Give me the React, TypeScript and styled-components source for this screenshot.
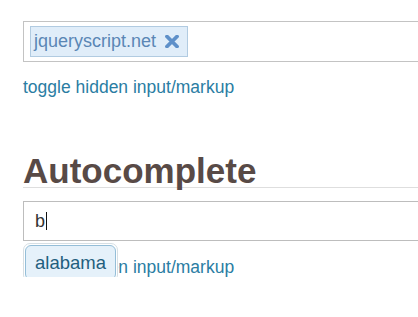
import React from 'react';
import styled, { createGlobalStyle } from 'styled-components';

const GlobalStyle = createGlobalStyle`
  html, body {
    margin: 0;
    padding: 0;
    background: #ffffff;
    overflow: hidden;
  }

  body {
    font-family: 'Liberation Sans', Arial, sans-serif;
  }
`;

const Page = styled.div`
  width: 600px;
  padding: 21px 0 0 23px;
`;

const TagBox = styled.div`
  box-sizing: border-box;
  height: 41px;
  border: 1px solid #c3c3c3;
  display: flex;
  align-items: center;
  padding: 0 6px;
`;

const Tag = styled.span`
  box-sizing: border-box;
  height: 31px;
  display: inline-flex;
  align-items: center;
  gap: 9px;
  padding: 0 8px 0 3px;
  background: #e0edf9;
  border: 1px solid #b1cbe1;
  color: #5a86b5;
  font-size: 18px;
`;

const Remove = styled.svg`
  width: 14px;
  height: 13px;
  display: block;
`;

const ToggleLink = styled.a`
  display: block;
  margin-top: ${({ $top }: { $top: number }) => $top}px;
  color: #2a7da3;
  font-size: 17.5px;
  line-height: 20px;
  text-decoration: none;
`;

const Heading = styled.h2`
  margin: 57px 0 0;
  padding: 0;
  font-size: 35px;
  line-height: 33px;
  font-weight: bold;
  color: #584a46;
  border-bottom: 1px solid #dedede;
`;

const AutoField = styled.div`
  position: relative;
  margin-top: 13px;
`;

const InputBox = styled.div`
  box-sizing: border-box;
  height: 40px;
  border: 1px solid #bdbdbd;
  display: flex;
  align-items: center;
  padding-left: 11px;
  color: #333333;
  font-size: 18px;
`;

const Caret = styled.span`
  display: inline-block;
  width: 1px;
  height: 18px;
  margin-left: 1px;
  background: #111111;
`;

const Menu = styled.ul`
  position: absolute;
  top: 42px;
  left: 0;
  margin: 0;
  padding: 1px;
  list-style: none;
  border: 1px solid #d6dfe4;
  border-radius: 7px;
  background: #ffffff;
`;

const MenuItem = styled.li`
  box-sizing: border-box;
  height: 35px;
  display: flex;
  align-items: center;
  padding: 0 9px;
  border: 1px solid #94bed8;
  border-radius: 6px;
  background: #e5f1fa;
  color: #1f5f7e;
  font-size: 18.5px;
`;

const App: React.FC = () => {
  return (
    <>
      <GlobalStyle />
      <Page>
        <TagBox>
          <Tag>
            jqueryscript.net
            <Remove viewBox="0 0 14 13">
              <path
                d="M2 1.5 L12 11.5 M12 1.5 L2 11.5"
                stroke="#5e90c9"
                strokeWidth="3.8"
                strokeLinecap="round"
              />
            </Remove>
          </Tag>
        </TagBox>
        <ToggleLink href="#" $top={15}>
          toggle hidden input/markup
        </ToggleLink>

        <Heading>Autocomplete</Heading>
        <AutoField>
          <InputBox>
            b<Caret />
          </InputBox>
          <Menu>
            <MenuItem>alabama</MenuItem>
          </Menu>
        </AutoField>
        <ToggleLink href="#" $top={16}>
          toggle hidden input/markup
        </ToggleLink>
      </Page>
    </>
  );
};

export default App;
